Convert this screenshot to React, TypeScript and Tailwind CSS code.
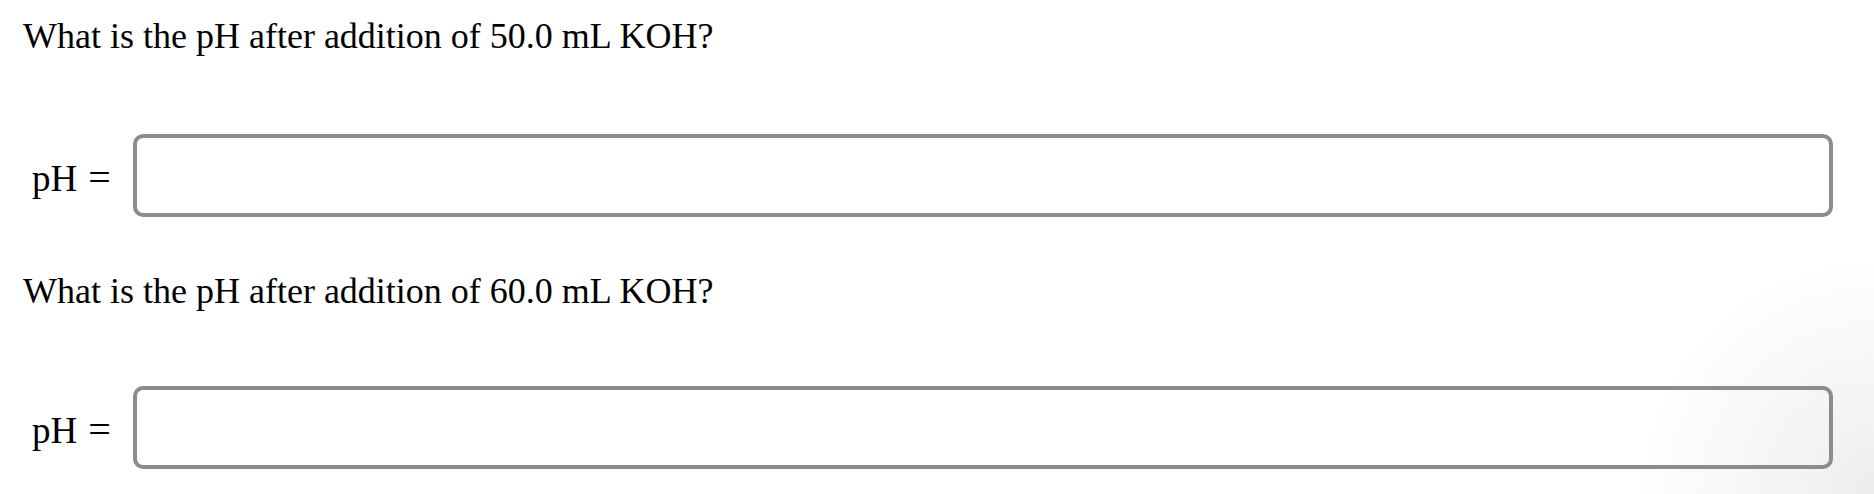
export default function App() {
  const questions = ["50.0", "60.0"];
  return (
    <div className="relative w-full h-[494px] overflow-hidden bg-white bg-[radial-gradient(circle_at_100%_100%,rgba(0,0,0,0.07),rgba(0,0,0,0)_240px)] pl-[23px] pr-[41px] pt-[12px] text-black font-['Liberation_Serif','Times_New_Roman',serif]">
      {questions.map((vol, i) => (
        <div key={vol} className={i === 0 ? "" : "mt-[50px]"}>
          <p className="text-[36px] leading-[48px]">
            What is the pH after addition of {vol} mL KOH?
          </p>
          <div className={`flex items-center ${i === 0 ? "mt-[74px]" : "mt-[71px]"}`}>
            <label className="ml-[9px] flex items-center leading-none">
              <span className="mt-[6px] text-[37px]">pH</span>
              <span className="ml-[11px] mt-[4px] text-[40px]">=</span>
            </label>
            <input
              type="text"
              aria-label="pH"
              className="ml-[22px] h-[83px] flex-1 rounded-[10px] border-[4px] border-[#8c8c8c] bg-transparent px-3 text-[30px] outline-none"
            />
          </div>
        </div>
      ))}
    </div>
  );
}
